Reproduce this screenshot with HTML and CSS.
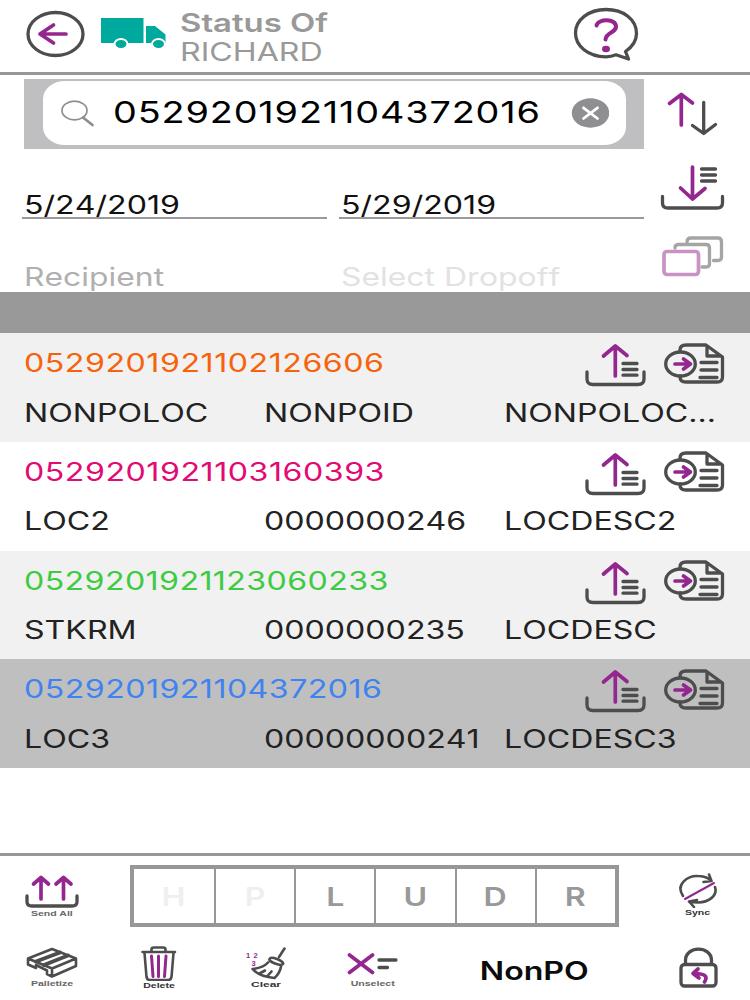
FILE: index.html
```html
<!DOCTYPE html>
<html lang="en">
<head>
<meta charset="utf-8">
<title>Status Of</title>
<link rel="stylesheet" href="styles.css">
</head>
<body>
<svg class="defs" width="0" height="0">
  <symbol id="upload" viewBox="584 341 63 47">
    <path class="d" d="M587 372V379Q587 384.500 593 384.500H638Q644 384.500 644 379V372M623 363.500H637M623 369.500H637M623 375.200H637"/>
    <path class="p" d="M615.300 376V346M603.500 356L615.300 346L627 355.500"/>
  </symbol>
  <symbol id="doc" viewBox="662 341 63 43">
    <path class="d" d="M680 350V349Q680 344 686 344H706L722.500 356V376Q722.500 381 717 381H686Q680 381 680 376V375M707 345V355H721M701 361.500H717M701 369H717M700 376.500H717"/>
    <ellipse class="d" cx="680.500" cy="363" rx="14.800" ry="12"/>
    <path class="p" d="M675 363H690M683.500 358L690.500 363L683.500 368"/>
  </symbol>
</svg>
<div class="app">
  <header class="header">
    <svg class="back" width="62" height="50" viewBox="24 9 62 50"><ellipse class="d" cx="55.500" cy="34" rx="27.500" ry="21.500"/><path class="p" d="M66 34H40M53.500 25L40 34L53.500 43"/></svg>
    <svg class="truck" width="66" height="32" viewBox="100 17 66 32"><path fill="#00a99d" d="M101 18H143.500V43H101ZM146 26H155L165.500 34.500V43H146Z"/><g fill="#00a99d" stroke="#fff" stroke-width="2"><ellipse cx="121" cy="44" rx="6.500" ry="5"/><ellipse cx="158.500" cy="44" rx="6.500" ry="5"/></g></svg>
    <div class="title"><b class="t head1">Status Of</b><span class="t head2">RICHARD</span></div>
    <svg class="help" width="68" height="56" viewBox="572 6 68 56"><path class="d" d="M616 54.800L628.500 59L625.500 51.500Q636.500 44 636.500 33.500C636.500 19.500 623.500 9.500 606 9.500S575.500 20 575.500 33S588 56.800 606 56.800Q611 56.800 616 54.800Z"/><path class="p help-mark" d="M596.500 25.500C598 18.500 616.500 18 616 27C615.500 33 606 32 605.500 39.500"/><ellipse cx="606" cy="49" rx="4" ry="3.300" fill="#93278f"/></svg>
  </header>

  <section class="filters">
    <div class="fields">
      <div class="search"><div class="search-box">
        <svg width="36" height="30" viewBox="60 97 36 30"><ellipse cx="74.500" cy="109.500" rx="12.500" ry="9.300" fill="none" stroke="#8e8e93" stroke-width="1.700"/><path d="M83 116.500L92.500 124" stroke="#8e8e93" stroke-width="2.800" stroke-linecap="round"/></svg>
        <span class="t query">0529201921104372016</span>
        <svg class="clear" width="38" height="30" viewBox="571 98 38 30"><ellipse cx="590.500" cy="113" rx="18.700" ry="14.700" fill="#8e8e93"/><path d="M583.500 107.800L597.500 118.500M597.500 107.800L583.500 118.500" stroke="#fff" stroke-width="2.800" stroke-linecap="round"/></svg>
      </div></div>
      <div class="pair dates"><div class="field"><span class="t date">5/24/2019</span></div><div class="field"><span class="t date">5/29/2019</span></div></div>
      <div class="pair picks"><div class="field"><span class="t recipient">Recipient</span></div><div class="field"><span class="t dropoff">Select Dropoff</span></div></div>
    </div>
    <svg class="side" width="74" height="200" viewBox="655 88 74 200">
      <path class="p" d="M681.300 125V95M669.500 103.500L681.300 94.500L692.500 103"/>
      <path class="d" d="M703.700 102.500V133M692.500 125.500L703.700 133.500L715.500 124.500"/>
      <path class="d" d="M662.500 196.500V203Q662.500 208 668 208H717Q722.500 208 722.500 203V196.500M701.500 169H715.500M701.500 175H715.500M701.500 181H715.500"/>
      <path class="p" d="M692.500 167V199M680.500 188L692.500 199L705 188.500"/>
      <g class="faded"><path class="d" d="M687 242Q687 238 691 238H718Q721.500 238 721.500 242V257Q721.500 260.500 718 260.500H713.500M675 248V247.500Q675 244.500 679 244.500H706Q709.500 244.500 709.500 248V264Q709.500 267 706 267H702"/><rect class="p" x="664" y="251.500" width="34.500" height="23" rx="3"/></g>
    </svg>
  </section>
  <div class="band"></div>

  <main class="list">
    <article class="row shade">
      <div class="top"><span class="t num orange">0529201921102126606</span><svg class="up"><use href="#upload"/></svg><svg class="dc"><use href="#doc"/></svg></div>
      <div class="cols"><span><i class="t">NONPOLOC</i></span><span><i class="t">NONPOID</i></span><span><i class="t">NONPOLOC...</i></span></div>
    </article>
    <article class="row">
      <div class="top"><span class="t num pink">0529201921103160393</span><svg class="up"><use href="#upload"/></svg><svg class="dc"><use href="#doc"/></svg></div>
      <div class="cols"><span><i class="t">LOC2</i></span><span><i class="t">0000000246</i></span><span><i class="t">LOCDESC2</i></span></div>
    </article>
    <article class="row shade">
      <div class="top"><span class="t num green">0529201921123060233</span><svg class="up"><use href="#upload"/></svg><svg class="dc"><use href="#doc"/></svg></div>
      <div class="cols"><span><i class="t">STKRM</i></span><span><i class="t">0000000235</i></span><span><i class="t">LOCDESC</i></span></div>
    </article>
    <article class="row selected">
      <div class="top"><span class="t num blue">0529201921104372016</span><svg class="up"><use href="#upload"/></svg><svg class="dc"><use href="#doc"/></svg></div>
      <div class="cols"><span><i class="t">LOC3</i></span><span><i class="t">00000000241</i></span><span><i class="t">LOCDESC3</i></span></div>
    </article>
  </main>

  <footer class="footer">
    <div class="bar bar1">
      <button class="tool send"><svg width="58" height="36" viewBox="23 873 58 36"><path class="d" d="M27 896V902Q27 906 32 906H72Q77 906 77 902V896"/><path class="p" d="M41 899V877.500M33.500 884L41 877.500L48.500 884M63.500 899V877.500M56 884L63.500 877.500L71 884"/></svg><span class="t tiny gray">Send All</span></button>
      <div class="segments"><span class="off"><b class="t">H</b></span><span class="off"><b class="t">P</b></span><span><b class="t">L</b></span><span><b class="t">U</b></span><span><b class="t">D</b></span><span><b class="t">R</b></span></div>
      <button class="tool sync"><svg width="42" height="36" viewBox="677 872 42 36"><path class="d thin" d="M683 896C675 884 688 875.500 698 876Q705 876 711 880M709 874.500L711.500 881L703.500 882M715 887C718 896 708 902.500 698 902.500Q693 902.500 689 901.500M697 900L689 901.500L694 907"/><path class="p thin" d="M685 899L714 883" stroke-linecap="butt"/></svg><span class="t tiny">Sync</span></button>
    </div>
    <div class="bar bar2">
      <button class="tool pallet"><svg width="54" height="31" viewBox="25 948 54 31"><path class="d thin" d="M52 950L76 959.500V967L52 977.500L47 975V971.500L36 966V969L28 965.500V959.500ZM28 959.500L52 969.500L76 959.500M52 969.500V977.500"/><path class="d gaps" d="M36 962.500L60 953.500M44 966L68 956.500"/></svg><span class="t tiny gray">Palletize</span></button>
      <button class="tool delete"><svg width="36" height="36" viewBox="141 946 36 36"><path class="d thin" d="M142.500 953H175M144.500 954L146.500 978Q147 981 150 981H168Q171 981 171.500 978L173.500 954M151.500 952V950.500Q151.500 948.500 154 948.500H163Q165.500 948.500 165.500 950.500V952"/><path class="p slats" d="M151.500 957L153 977.500M158.500 957V977.500M166 957L164.500 977.500"/></svg><span class="t tiny">Delete</span></button>
      <button class="tool broom"><svg width="40" height="34" viewBox="246 947 40 34"><g class="digits"><text x="246" y="958.500">1</text><text x="253.500" y="959">2</text><text x="251.500" y="966.500">3</text></g><path class="d thin" d="M284.500 949.500L279 958M269.500 960Q270.500 957.500 277 960Q284 963 283 965Q281.500 967 275 964.500Q268.500 962 269.500 960ZM268 963.500Q263 969 252.500 970Q259 977.500 274.500 979Q280 974 281 967.500M259.500 974.500L265 971.500M267 977.500L271.500 972.500"/></svg><span class="t tiny wide">Clear</span></button>
      <button class="tool unselect"><svg width="52" height="24" viewBox="347 953 52 24"><path class="p" d="M349.500 956L372.500 973.500M372.500 956L349.500 973.500"/><path class="d" d="M379 961H396M379 968.500H387.500"/></svg><span class="t tiny gray">Unselect</span></button>
      <span class="nonpo"><b class="t">NonPO</b></span>
      <svg class="lock" width="42" height="42" viewBox="678 948 42 42"><path class="d" d="M685.500 965V961C686 946.500 711 946.500 711.500 961V965"/><rect class="d" x="681" y="965.500" width="35" height="21.500" rx="3.500"/><path class="p" d="M704.500 983Q710 974.500 695 974.500M698 970L693 974.500L699 979"/></svg>
    </div>
  </footer>
</div>
</body>
</html>
```
FILE: styles.css
```css
* { box-sizing: border-box; }
body { margin: 0; background: #fff; font-family: Inter, "Liberation Sans", sans-serif; font-size: 25.500px; color: #222; }
.defs { position: absolute; }
.app { width: 750px; height: 1000px; display: flex; flex-direction: column; overflow: hidden; }
.t { display: inline-block; font-style: normal; white-space: nowrap; transform: scaleX(1.26); transform-origin: left center; line-height: 30px; font-weight: 400; font-kerning: none; margin-left: -1px; }
.d { fill: none; stroke: #4d4d4d; stroke-width: 3.300; stroke-linecap: round; stroke-linejoin: round; }
.p { fill: none; stroke: #93278f; stroke-width: 3.700; stroke-linecap: round; stroke-linejoin: round; }
.thin { stroke-width: 2.600; }
.gaps { stroke-width: 3.800; }
.p.thin { stroke-width: 2; }
.slats { stroke-width: 3; }
svg { display: block; flex: none; }

.header { height: 75px; border-bottom: 3px solid #979797; display: flex; padding-left: 24px; }
.back { margin-top: 9px; }
.truck { margin: 17px 0 0 14px; }
.title { display: flex; flex-direction: column; width: 392px; padding: 8px 0 0 15px; color: #999; }
.head1 { font-weight: 600; height: 29px; transform: scaleX(1.29); }
.help { margin: 6px 0 0 14px; }
.help-mark { stroke-width: 4; }

.filters { height: 217px; display: flex; justify-content: space-between; padding: 4px 21px 0 22px; }
.fields { width: 622px; }
.search { height: 70px; margin-left: 2px; padding: 2px 18px 4px 19px; background: #bfbfc1; }
.search-box { height: 64px; background: #fff; border-radius: 22px / 18px; display: flex; align-items: center; padding: 0 17px; }
.query { color: #000; font-size: 30px; letter-spacing: .68px; margin: -2px 0 0 17px; }
.clear { margin-left: auto; }
.pair { display: grid; grid-template-columns: 305px 305px; gap: 12px; }
.field { padding-left: 3px; display: flex; align-items: flex-end; }
.dates .field { height: 70px; border-bottom: 2px solid #999; }
.date { color: #111; height: 27px; }
.picks .field { height: 73px; }
.recipient { color: #b0b0b0; transform: scaleX(1.25); }
.dropoff { color: #e2e2e4; transform: scaleX(1.25); }
.side { margin-top: 9px; }
.faded { opacity: .5; }
.band { height: 41px; background: #999; }

.row { height: 108.800px; padding-left: 25px; }
.shade { background: #f1f1f1; }
.selected { background: #bfbfbf; }
.top { height: 60px; display: flex; align-items: center; }
.num { width: 560px; letter-spacing: .42px; }
.up { width: 63px; height: 47px; margin-top: 3px; }
.dc { width: 63px; height: 43px; margin: 0 0 0 15px; }
.cols { height: 38px; display: grid; grid-template-columns: 240px 240px 1fr; align-items: center; }
.orange { color: #f7630c; }
.pink { color: #e20a73; }
.green { color: #3dcb42; letter-spacing: .32px; }
.blue { color: #3f83f0; letter-spacing: .36px; }

.footer { margin-top: auto; height: 147px; border-top: 3px solid #979797; }
.bar { display: flex; }
.bar1 { height: 82px; padding: 9px 31px 0 23px; }
.tool { border: 0; background: none; padding: 0; font: inherit; display: flex; flex-direction: column; align-items: center; justify-content: flex-start; }
.tiny { font: bold 8px/10px "Liberation Sans", sans-serif; transform-origin: center; color: #333; transform: scaleX(1.32); margin: 0; }
.tiny.gray { color: #666; }
.tiny.wide { transform: scaleX(1.5); }
.send { width: 58px; margin-top: 8px; }
.segments { width: 489px; height: 62px; margin-left: 49px; border: solid #979797; border-width: 4px; display: grid; grid-template-columns: repeat(6, 1fr); }
.segments span { display: grid; place-items: center; border-left: 2px solid #979797; color: #999; padding-top: 2px; }
.segments span:first-child { border: 0; }
.segments .off { color: #efefef; }
.segments .t, .nonpo .t { transform-origin: center; font-weight: 600; }
.sync { width: 42px; margin: 7px 0 0 58px; }
.bar2 { padding-left: 25px; height: 60px; }
.pallet { width: 54px; margin-top: 9px; }
.pallet .tiny { margin-top: 1px; }
.delete { width: 36px; margin: 7px 0 0 62px; }
.broom { width: 40px; margin: 8px 0 0 69px; }
.digits { font: bold 7.500px "Liberation Sans", sans-serif; fill: #93278f; }
.unselect { width: 52px; margin: 14px 0 0 61px; }
.unselect .tiny { margin-top: 3px; }
.nonpo { width: 150px; display: flex; justify-content: center; margin: 18px 0 0 61px; color: #0b0b0b; }
.lock { margin: 9px 0 0 68px; }
```
